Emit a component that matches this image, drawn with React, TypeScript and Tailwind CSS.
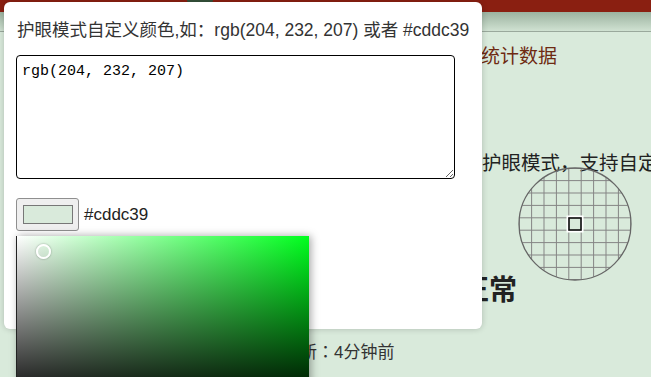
import { useState } from 'react';

const gridOffsets = [6.2, 18.6, 31, 43.4, 55.8];

function EyeGrid() {
  return (
    <svg width="116" height="116" viewBox="0 0 116 116" className="block">
      <defs>
        <clipPath id="lens">
          <circle cx="58" cy="58" r="56" />
        </clipPath>
      </defs>
      <g clipPath="url(#lens)" stroke="#858585" strokeWidth="1">
        {gridOffsets.map((offset) => (
          <g key={offset}>
            <line x1={58 - offset} y1="0" x2={58 - offset} y2="116" />
            <line x1={58 + offset} y1="0" x2={58 + offset} y2="116" />
            <line x1="0" y1={58 - offset} x2="116" y2={58 - offset} />
            <line x1="0" y1={58 + offset} x2="116" y2={58 + offset} />
          </g>
        ))}
      </g>
      <circle cx="58" cy="58" r="56" fill="none" stroke="#666" strokeWidth="1.3" />
      <rect x="50.5" y="50.5" width="15" height="15" fill="none" stroke="#fff" strokeWidth="2" />
      <rect x="52" y="52" width="12" height="12" fill="none" stroke="#111" strokeWidth="1.6" />
    </svg>
  );
}

export default function App() {
  const [value, setValue] = useState('rgb(204, 232, 207)');

  return (
    <div
      className="relative w-[651px] h-[377px] overflow-hidden bg-[#d9eadb] text-[#222]"
      style={{ fontFamily: '"Liberation Sans", "Noto Sans CJK SC", sans-serif' }}
    >
      {/* page behind the dialog */}
      <header>
        <div className="h-[12px] bg-[#8a1f11]">
          <div className="ml-[187px] h-[3px] w-[26px] rounded-b-full bg-[#35523a]" />
        </div>
        <div className="h-[20px] bg-gradient-to-b from-[#9cb2a0] to-[#d0e2d2] border-b border-[#9aa99c]" />
      </header>

      <main>
        <div className="ml-[481px] mt-[13px] text-[19px] leading-[24px] text-[#6e2a12] whitespace-nowrap">统计数据</div>
        <div className="ml-[482px] mt-[84px] text-[19.5px] leading-[20px] whitespace-nowrap">护眼模式，支持自定义颜色</div>
        <div className="flex items-start -mt-[7px]">
          <div className="w-[517px] flex justify-end pt-[111px]">
            <h2 className="text-[28px] leading-[28px] font-bold whitespace-nowrap">服务正常</h2>
          </div>
          <EyeGrid />
        </div>
        <div className="ml-[249px] mt-[36px] text-[17px] leading-[20px] text-[#333] whitespace-nowrap">
          最后更新<span style={{ fontFamily: '"Noto Sans CJK TC", sans-serif' }}>：</span>4分钟前
        </div>
      </main>

      {/* dialog */}
      <div className="absolute left-[4px] top-[2px] w-[478px] h-[327px] rounded-[6px] bg-white shadow-[0_0_6px_rgba(0,0,0,0.2)]">
        <p className="pl-[13px] pt-[17px] text-[17.5px] leading-[22px] text-[#333] whitespace-nowrap">
          护眼模式自定义颜色,如：rgb(204, 232, 207) 或者 #cddc39
        </p>
        <textarea
          value={value}
          onChange={(event) => setValue(event.target.value)}
          className="block ml-[12px] mt-[14px] w-[439px] h-[124px] rounded-[4px] border border-black px-[5px] pt-[7px] text-[15px] leading-[18px] text-black outline-none resize"
          style={{ fontFamily: '"Liberation Mono", "Noto Sans CJK SC", monospace' }}
        />
        <div className="flex items-center ml-[12px] mt-[19px]">
          <div className="w-[63px] h-[33px] rounded-[3px] border border-[#8f8f8f] bg-[#efefef] flex items-center justify-center">
            <div className="w-[50px] h-[19px] border border-[#777] bg-[#d9eadb]" />
          </div>
          <span className="ml-[5px] text-[17px] text-[#222]">#cddc39</span>
        </div>
      </div>

      {/* colour picker popup */}
      <div className="absolute left-[16px] top-[236px] w-[293px] h-[170px] border-l border-[#222] bg-[linear-gradient(to_bottom,transparent,#000),linear-gradient(to_right,#fff,#00ff1e)] shadow-[2px_0_8px_rgba(0,0,0,0.35)]">
        <div className="absolute left-[19px] top-[8px] w-[15px] h-[15px] rounded-full border-2 border-white shadow-[0_0_2px_rgba(0,0,0,0.4)]" />
      </div>
    </div>
  );
}
